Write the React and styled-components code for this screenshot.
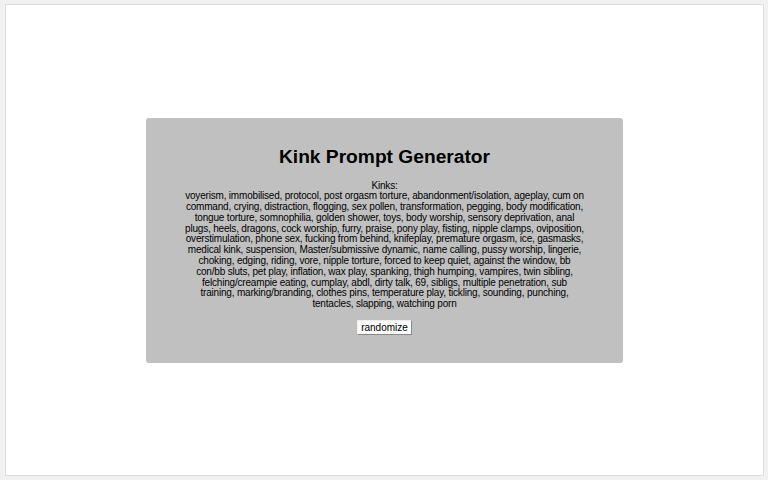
import React, { useState } from "react";
import styled, { createGlobalStyle } from "styled-components";

const kinks = [
  "voyerism", "immobilised", "protocol", "post orgasm torture", "abandonment/isolation",
  "ageplay", "cum on command", "crying", "distraction", "flogging", "sex pollen",
  "transformation", "pegging", "body modification", "tongue torture", "somnophilia",
  "golden shower", "toys", "body worship", "sensory deprivation", "anal plugs", "heels",
  "dragons", "cock worship", "furry", "praise", "pony play", "fisting", "nipple clamps",
  "oviposition", "overstimulation", "phone sex", "fucking from behind", "knifeplay",
  "premature orgasm", "ice", "gasmasks", "medical kink", "suspension",
  "Master/submissive dynamic", "name calling", "pussy worship", "lingerie", "choking",
  "edging", "riding", "vore", "nipple torture", "forced to keep quiet",
  "against the window", "bb con/bb sluts", "pet play", "inflation", "wax play",
  "spanking", "thigh humping", "vampires", "twin sibling", "felching/creampie eating",
  "cumplay", "abdl", "dirty talk", "69", "sibligs", "multiple penetration",
  "sub training", "marking/branding", "clothes pins", "temperature play", "tickling",
  "sounding", "punching", "tentacles", "slapping", "watching porn",
];

const GlobalStyle = createGlobalStyle`
  html, body, #root {
    margin: 0;
    height: 100%;
  }
  body {
    background: #f1f1f1;
    font-family: "Liberation Sans", Arial, sans-serif;
  }
`;

const Page = styled.div`
  box-sizing: border-box;
  height: 100%;
  padding: 4px 4px 4px 5px;
`;

const Frame = styled.div`
  box-sizing: border-box;
  height: 100%;
  background: #ffffff;
  border: 1px solid #dcdcdc;
  display: flex;
  align-items: center;
  justify-content: center;
`;

const Panel = styled.div`
  box-sizing: border-box;
  width: 477px;
  height: 245px;
  background: #c0c0c0;
  border-radius: 3px;
  padding: 27px 39px 0;
  text-align: center;
  color: #000;
`;

const Title = styled.h1`
  margin: 0 0 12px;
  font-size: 19.2px;
  font-weight: bold;
  line-height: 24px;
`;

const List = styled.div`
  font-size: 10px;
  letter-spacing: -0.19px;
  line-height: 10.8px;
`;

const Button = styled.button`
  margin-top: 10px;
  font-family: "Liberation Sans", Arial, sans-serif;
  font-size: 10px;
  padding: 1px 3px;
  background: #fafafa;
  border: 1px solid #999;
  border-color: #eee #888 #888 #eee;
  color: #000;
`;

export default function App() {
  const [list, setList] = useState(kinks);

  const shuffle = () => {
    const next = [...kinks];
    for (let i = next.length - 1; i > 0; i--) {
      const j = Math.floor(Math.random() * (i + 1));
      [next[i], next[j]] = [next[j], next[i]];
    }
    setList(next);
  };

  return (
    <>
      <GlobalStyle />
      <Page>
        <Frame>
          <Panel>
            <Title>Kink Prompt Generator</Title>
            <List>
              Kinks:
              <br />
              {list.join(", ")}
            </List>
            <Button onClick={shuffle}>randomize</Button>
          </Panel>
        </Frame>
      </Page>
    </>
  );
}
